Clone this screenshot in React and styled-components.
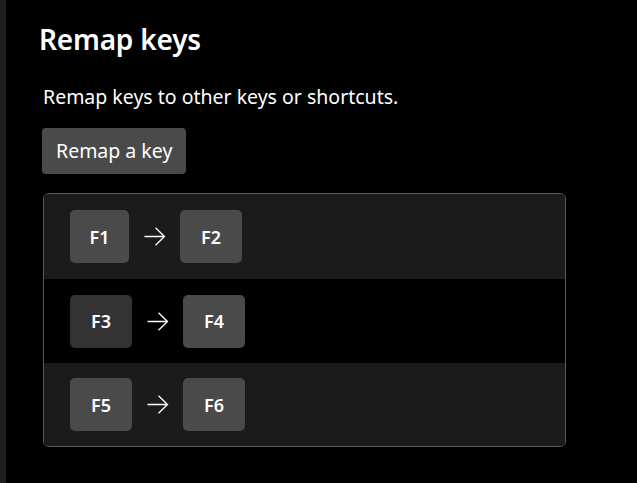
import React from "react";
import styled, { createGlobalStyle } from "styled-components";

const Global = createGlobalStyle`
  html, body { margin: 0; padding: 0; background: #000; }
  body { font-family: "Noto Sans", "Open Sans", sans-serif; color: #fff; }
`;

const Page = styled.div`
  display: flex;
  width: 637px;
  height: 483px;
  background: #000;
  overflow: hidden;
`;

const SideStrip = styled.div`
  width: 6px;
  flex: none;
  background: #1f1f1f;
`;

const Content = styled.main`
  flex: 1;
  display: flex;
  flex-direction: column;
  align-items: flex-start;
  padding: 17px 0 0 36px;
`;

const Title = styled.h1`
  margin: 0 0 0 -3px;
  font-size: 28px;
  font-weight: 600;
  line-height: 44px;
  letter-spacing: -0.2px;
`;

const Description = styled.p`
  margin: 23px 0 0 1px;
  font-size: 19.5px;
  line-height: 26px;
  font-weight: 400;
`;

const Button = styled.button`
  margin-top: 18px;
  height: 46px;
  padding: 0 14px;
  border: none;
  border-radius: 4px;
  background: #4a4a4a;
  color: #fff;
  font-family: inherit;
  font-size: 19.5px;
  line-height: 46px;
`;

const Table = styled.div`
  margin-top: 19px;
  margin-left: 1px;
  width: 521px;
  border: 1px solid #5c5c5c;
  border-radius: 6px;
  overflow: hidden;
  display: flex;
  flex-direction: column;
`;

const Row = styled.div`
  display: flex;
  align-items: center;
  height: ${(p) => p.$h}px;
  padding-left: 26px;
  background: ${(p) => (p.$alt ? "#000" : "#1b1b1b")};
`;

const Key = styled.div`
  height: 53px;
  min-width: ${(p) => p.$w}px;
  box-sizing: border-box;
  display: flex;
  align-items: center;
  justify-content: center;
  border-radius: 5px;
  background: ${(p) => (p.$dim ? "#333333" : "#4a4a4a")};
  font-size: 18px;
  font-weight: 600;
`;

const ArrowBox = styled.div`
  width: 51px;
  display: flex;
  justify-content: center;
  padding-left: 1px;
  box-sizing: border-box;
`;

const Arrow = () => (
  <ArrowBox>
    <svg width="22" height="19" viewBox="0 0 22 19" fill="none">
      <path d="M0.5 9.5H20.5M11.5 0.8L20.5 9.5L11.5 18.2" stroke="#fff" strokeWidth="1.3" />
    </svg>
  </ArrowBox>
);

const rows = [
  { from: "F1", to: "F2", fw: 59, tw: 62, h: 85 },
  { from: "F3", to: "F4", fw: 62, tw: 62, h: 84, alt: true, dim: true },
  { from: "F5", to: "F6", fw: 62, tw: 62, h: 83 },
];

export default function App() {
  return (
    <Page>
      <Global />
      <SideStrip />
      <Content>
        <Title>Remap keys</Title>
        <Description>Remap keys to other keys or shortcuts.</Description>
        <Button>Remap a key</Button>
        <Table>
          {rows.map((r) => (
            <Row key={r.from} $alt={r.alt} $h={r.h}>
              <Key $w={r.fw} $dim={r.dim}>{r.from}</Key>
              <Arrow />
              <Key $w={r.tw}>{r.to}</Key>
            </Row>
          ))}
        </Table>
      </Content>
    </Page>
  );
}
